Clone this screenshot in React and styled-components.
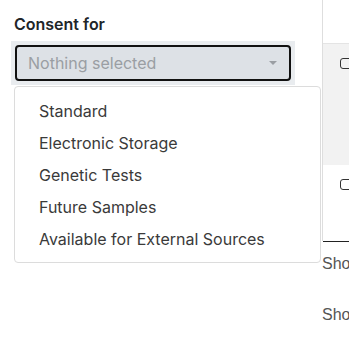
import React from 'react'
import styled, { createGlobalStyle } from 'styled-components'

const GlobalStyle = createGlobalStyle`
  html, body {
    margin: 0;
    padding: 0;
    background: #fff;
  }
  body {
    font-family: Inter, "Liberation Sans", sans-serif;
    width: 349px;
    height: 353px;
    overflow: hidden;
  }
`

const Page = styled.div`
  display: flex;
  width: 349px;
  height: 353px;
  overflow: hidden;
`

const LeftPane = styled.div`
  position: relative;
  width: 322px;
  flex-shrink: 0;
  padding: 13px 0 0 14px;
  box-sizing: border-box;
`

const Label = styled.div`
  font-size: 16px;
  font-weight: 600;
  line-height: 22px;
  color: #212529;
`

const SelectWrap = styled.div`
  margin: 6px 0 0 -3px;
  width: 284px;
  padding: 4px;
  box-sizing: border-box;
  background: #e9ecef;
`

const Select = styled.div`
  display: flex;
  align-items: center;
  justify-content: space-between;
  height: 36px;
  padding: 0 12px 0 11px;
  box-sizing: border-box;
  border: 2px solid #111;
  border-radius: 4px;
  background: #dde1e6;
  color: #9a9ea3;
  font-size: 16px;
`

const Caret = styled.span`
  width: 0;
  height: 0;
  border-left: 4px solid transparent;
  border-right: 4px solid transparent;
  border-top: 4px solid #9a9ea3;
`

const HiddenField = styled.div`
  margin-top: 14px;
  width: 280px;
  height: 38px;
  border-left: 2px solid #222;
  box-sizing: border-box;
`

const Menu = styled.ul`
  position: absolute;
  top: 86px;
  left: 14px;
  width: 307px;
  height: 177px;
  margin: 0;
  padding: 8px 0 9px;
  box-sizing: border-box;
  list-style: none;
  background: #fff;
  border: 1px solid #dcdcdc;
  border-radius: 4px;
`

const Item = styled.li`
  height: 32px;
  line-height: 32px;
  padding-left: 24px;
  font-size: 16px;
  color: #3a3a3a;
`

const RightPane = styled.div`
  flex: 1;
  display: flex;
  flex-direction: column;
`

const Table = styled.div`
  border-left: 1px solid #dedede;
  display: flex;
  flex-direction: column;
`

const Row = styled.div`
  height: ${p => p.h}px;
  background: ${p => (p.shade ? '#f2f2f2' : '#fff')};
  border-top: ${p => (p.shade ? '1px solid #e4e4e4' : 'none')};
  padding: ${p => p.pad}px 0 0 17px;
  box-sizing: border-box;
`

const Check = styled.span`
  display: block;
  width: 13px;
  height: 11px;
  border: 1px solid #333;
  border-radius: 3px;
  box-sizing: border-box;
`

const Rule = styled.div`
  height: 1px;
  background: #222;
  margin-left: 1px;
`

const ShowText = styled.div`
  font-family: "Liberation Sans", Arial, sans-serif;
  font-size: 16px;
  color: #555;
  line-height: 18px;
  margin-top: ${p => p.mt}px;
  white-space: nowrap;
`

const options = [
  'Standard',
  'Electronic Storage',
  'Genetic Tests',
  'Future Samples',
  'Available for External Sources',
]

export default function App() {
  return (
    <Page>
      <GlobalStyle />
      <LeftPane>
        <Label>Consent for</Label>
        <SelectWrap>
          <Select>
            <span>Nothing selected</span>
            <Caret />
          </Select>
        </SelectWrap>
        <HiddenField />
        <Menu>
          {options.map(o => (
            <Item key={o}>{o}</Item>
          ))}
        </Menu>
      </LeftPane>
      <RightPane>
        <Table>
          <Row h={43} pad={0} />
          <Row h={122} pad={14} shade>
            <Check />
          </Row>
          <Row h={76} pad={14}>
            <Check />
          </Row>
        </Table>
        <Rule />
        <ShowText mt={13}>Show</ShowText>
        <ShowText mt={33}>Show</ShowText>
      </RightPane>
    </Page>
  )
}
